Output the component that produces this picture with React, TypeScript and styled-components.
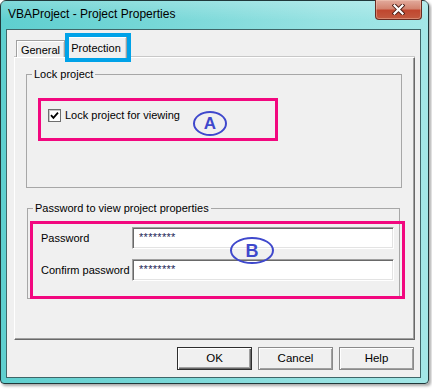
import React from "react";
import styled, { createGlobalStyle } from "styled-components";

const Global = createGlobalStyle`
  html, body { margin: 0; padding: 0; background: #ffffff; }
  body { font-family: "Liberation Sans", Arial, sans-serif; font-size: 11px; color: #000; }
  * { box-sizing: border-box; }
`;

const Page = styled.div`
  width: 432px;
  height: 390px;
  background: #ffffff;
`;

const Window = styled.div`
  width: 429px;
  height: 384px;
  border: 1px solid #20383a;
  border-radius: 6px 6px 4px 4px;
  background: linear-gradient(90deg, #5ecfcf 0%, #79d8d8 40%, #96e2e2 75%, #a3e7e7 100%);
  box-shadow: 2px 2px 3px rgba(0, 0, 0, 0.35);
  display: flex;
  flex-direction: column;
  padding-bottom: 5px;
`;

const TitleBar = styled.div`
  height: 28px;
  display: flex;
  justify-content: space-between;
  align-items: flex-start;
  padding: 0 6px 0 7px;
  background: linear-gradient(180deg, rgba(255, 255, 255, 0.22) 0%, rgba(255, 255, 255, 0) 70%);
`;

const Title = styled.div`
  margin-top: 6px;
  font-size: 12px;
  line-height: 14px;
  color: #000;
`;

const CloseButton = styled.div`
  width: 47px;
  height: 20px;
  margin-top: -1px;
  border: 1px solid #6a2c22;
  border-top: none;
  border-radius: 0 0 4px 4px;
  background: linear-gradient(180deg, #e2ab9d 0%, #d38470 45%, #c0472f 55%, #c25a40 100%);
  box-shadow: inset 0 0 0 1px rgba(255, 220, 200, 0.35);
  display: flex;
  align-items: center;
  justify-content: center;
`;

const Client = styled.div`
  flex: 1;
  margin: 0 7px 0 5px;
  border: 1px solid #3f6668;
  background: #f0f0f0;
  display: flex;
  flex-direction: column;
  padding: 6px 5px 0 7px;
`;

const TabStrip = styled.div`
  height: 21px;
  display: flex;
  align-items: flex-end;
  padding-left: 2px;
  position: relative;
  z-index: 1;
`;

const Tab = styled.div<{ $active?: boolean }>`
  position: relative;
  height: ${(p) => (p.$active ? "22px" : "17px")};
  width: ${(p) => (p.$active ? "62px" : "49px")};
  margin-bottom: ${(p) => (p.$active ? "-1px" : "0")};
  border: 1px solid #a0a0a0;
  border-bottom: none;
  background: #f0f0f0;
  box-shadow: inset 1px 1px #ffffff, inset -1px 0 #d4d4d4;
  display: flex;
  justify-content: center;
  padding-top: ${(p) => (p.$active ? "5px" : "3px")};
  line-height: 13px;
`;

const Highlight = styled.div`
  position: absolute;
  left: -1px;
  top: -4px;
  width: 66px;
  height: 29px;
  border: 4px solid #00a2e8;
  pointer-events: none;
`;

const Panel = styled.div`
  height: 283px;
  border-top: 1px solid #ffffff;
  border-left: 1px solid #ffffff;
  border-right: 1px solid #696969;
  border-bottom: 1px solid #696969;
  box-shadow: inset -1px -1px #a0a0a0, 0 -1px #c8c8c8;
  display: flex;
  flex-direction: column;
  gap: 14px;
  padding: 10px 12px 0 11px;
`;

const Group = styled.fieldset<{ $h: number; $inset?: number }>`
  height: ${(p) => p.$h}px;
  margin: 0 ${(p) => (p.$inset ? 2 : 0)}px 0 ${(p) => (p.$inset ? 1 : 0)}px;
  padding: 0;
  border: 1px solid #a7a7a7;
  min-width: 0;
`;

const Legend = styled.legend`
  margin-left: 5px;
  padding: 0 2px;
  line-height: 13px;
`;

const CheckRow = styled.label`
  position: relative;
  display: flex;
  align-items: center;
  gap: 4px;
  height: 13px;
  margin: 28px 0 0 21px;
  line-height: 13px;
`;

const CheckBox = styled.span`
  width: 13px;
  height: 13px;
  border: 1px solid #6e6e6e;
  background: #ffffff;
  box-shadow: inset 1px 1px #c8c8c8;
  display: flex;
  align-items: center;
  justify-content: center;
`;

const PinkBox = styled.div<{ $l: number; $t: number; $w: number; $h: number }>`
  position: absolute;
  left: ${(p) => p.$l}px;
  top: ${(p) => p.$t}px;
  width: ${(p) => p.$w}px;
  height: ${(p) => p.$h}px;
  border: 3px solid #f2077f;
  pointer-events: none;
`;

const Badge = styled.div<{ $l: number; $t: number; $w: number; $h: number; $fs: number }>`
  position: absolute;
  left: ${(p) => p.$l}px;
  top: ${(p) => p.$t}px;
  width: ${(p) => p.$w}px;
  height: ${(p) => p.$h}px;
  border: 2px solid #3f48cc;
  border-radius: 50%;
  color: #3f48cc;
  font-family: "Liberation Sans", Arial, sans-serif;
  font-weight: bold;
  font-size: ${(p) => p.$fs}px;
  display: flex;
  align-items: center;
  justify-content: center;
  line-height: 1;
`;

const Rows = styled.div`
  position: relative;
  display: flex;
  flex-direction: column;
  gap: 10px;
  margin: 12px 5px 0 13px;
`;

const FieldRow = styled.div`
  display: flex;
  align-items: center;
  height: 22px;
`;

const FieldLabel = styled.div`
  width: 91px;
  line-height: 13px;
`;

const Input = styled.div`
  flex: 1;
  height: 22px;
  background: #ffffff;
  border-top: 1px solid #a0a0a0;
  border-left: 1px solid #a0a0a0;
  border-bottom: 1px solid #ffffff;
  border-right: 1px solid #ffffff;
  box-shadow: inset 1px 1px #696969, inset -1px -1px #e3e3e3;
  padding: 3px 0 0 6px;
  color: #1c2456;
  font-size: 11px;
  line-height: 13px;
  letter-spacing: 0.3px;
`;

const ButtonRow = styled.div`
  display: flex;
  justify-content: flex-end;
  gap: 6px;
  margin: 7px 1px 0 0;
`;

const Button = styled.div<{ $default?: boolean }>`
  width: 75px;
  height: 23px;
  border: 1px solid ${(p) => (p.$default ? "#2e2e2e" : "#8a8a8a")};
  background: #f0f0f0;
  box-shadow: ${(p) =>
    p.$default
      ? "inset 1px 1px #ffffff, inset -1px -1px #696969, inset -2px -2px #a0a0a0"
      : "inset 1px 1px #ffffff, inset -1px -1px #a0a0a0"};
  display: flex;
  align-items: center;
  justify-content: center;
  line-height: 13px;
  font-size: 11.5px;
`;

export default function App() {
  return (
    <Page>
      <Global />
      <Window>
        <TitleBar>
          <Title>VBAProject - Project Properties</Title>
          <CloseButton>
            <svg width="13" height="11" viewBox="0 0 13 11">
              <path d="M2.5 1.5 L10.5 9.5 M10.5 1.5 L2.5 9.5" stroke="#4a1c14" strokeWidth="4" strokeLinecap="square" />
              <path d="M2.5 1.5 L10.5 9.5 M10.5 1.5 L2.5 9.5" stroke="#ffffff" strokeWidth="2.2" strokeLinecap="square" />
            </svg>
          </CloseButton>
        </TitleBar>
        <Client>
          <TabStrip>
            <Tab>General</Tab>
            <Tab $active>
              Protection
              <Highlight />
            </Tab>
          </TabStrip>
          <Panel>
            <Group $h={120}>
              <Legend>Lock project</Legend>
              <CheckRow>
                <CheckBox>
                  <svg width="9" height="9" viewBox="0 0 9 9">
                    <path d="M1 4.2 L3.4 6.8 L8 1.6" stroke="#000" strokeWidth="1.8" fill="none" />
                  </svg>
                </CheckBox>
                Lock project for viewing
                <PinkBox $l={-10} $t={-11} $w={240} $h={43} />
                <Badge $l={145} $t={2} $w={34} $h={25} $fs={17}>A</Badge>
              </CheckRow>
            </Group>
            <Group $h={97} $inset={1}>
              <Legend>Password to view project properties</Legend>
              <Rows>
                <FieldRow>
                  <FieldLabel>Password</FieldLabel>
                  <Input>********</Input>
                </FieldRow>
                <FieldRow>
                  <FieldLabel>Confirm password</FieldLabel>
                  <Input>********</Input>
                </FieldRow>
                <PinkBox $l={-11} $t={-6} $w={375} $h={78} />
                <Badge $l={189} $t={10} $w={44} $h={27} $fs={18}>B</Badge>
              </Rows>
            </Group>
          </Panel>
          <ButtonRow>
            <Button $default>OK</Button>
            <Button>Cancel</Button>
            <Button>Help</Button>
          </ButtonRow>
        </Client>
      </Window>
    </Page>
  );
}
